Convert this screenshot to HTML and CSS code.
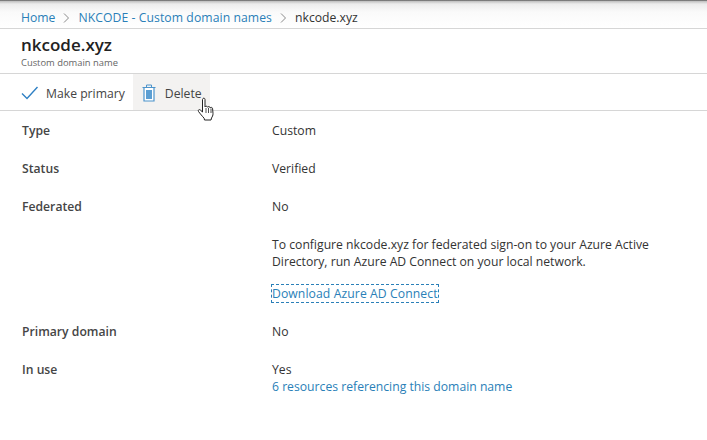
FILE: index.html
```html
<!DOCTYPE html>
<html lang="en">
<head>
<meta charset="utf-8">
<title>nkcode.xyz</title>
<link rel="stylesheet" href="styles.css">
</head>
<body>
<nav class="crumbs">
  <a href="#">Home</a>
  <svg class="chev" width="7" height="10" viewBox="0 0 7 10"><path d="M1 .5 5.5 5 1 9.500" fill="none" stroke="#8a8a8a" stroke-width="1"/></svg>
  <a href="#">NKCODE - Custom domain names</a>
  <svg class="chev" width="7" height="10" viewBox="0 0 7 10"><path d="M1 .5 5.500 5 1 9.500" fill="none" stroke="#8a8a8a" stroke-width="1"/></svg>
  <span>nkcode.xyz</span>
</nav>
<header class="head">
  <h1>nkcode.xyz</h1>
  <p>Custom domain name</p>
</header>
<div class="toolbar">
  <button class="tool">
    <svg width="18" height="14" viewBox="0 0 18 14"><path d="M1 7.500 6 12.500 16.500 1" fill="none" stroke="#2f80c4" stroke-width="1.400"/></svg>
    <span>Make primary</span>
  </button>
  <button class="tool hover">
    <svg width="14" height="18" viewBox="0 0 14 18"><path d="M.5 3.500h13M4.500 3.500V1h5v2.500" fill="none" stroke="#4d94cc" stroke-width="1"/><path d="M2 3.500h10V17H2z" fill="#fff" stroke="#4d94cc" stroke-width="1.200"/><path d="M4 6h6v9H4z" fill="#5c9fd3"/></svg>
    <span>Delete</span>
  </button>
  <svg class="cursor" width="20" height="25" viewBox="0 0 20 25"><path d="M6 1.500c1-.8 2 0 2 1V10c.3-1 2.300-1.200 2.600.2.500-1 2.400-.8 2.600.6.600-.8 2.300-.5 2.400.9l.4 4.800c.1 2-.8 3.300-1.500 4.500l-.5 2H7.500l-.4-1.800C5.500 19.500 3 16.500 1.500 14.500c-.8-1.200.6-2.600 1.800-1.500L5.500 15V2.500z" fill="#fff" stroke="#222" stroke-width="1"/><path d="M9 11v5M11.500 11v5M14 11.500V16" stroke="#222" stroke-width=".8" fill="none"/></svg>
</div>
<dl class="props">
  <div class="row"><dt>Type</dt><dd>Custom</dd></div>
  <div class="row"><dt>Status</dt><dd>Verified</dd></div>
  <div class="row"><dt>Federated</dt><dd>No
    <p class="note">To configure nkcode.xyz for federated sign-on to your Azure Active Directory, run Azure AD Connect on your local network.</p>
    <a class="focus" href="#">Download Azure AD Connect</a>
  </dd></div>
  <div class="row"><dt>Primary domain</dt><dd>No</dd></div>
  <div class="row"><dt>In use</dt><dd>Yes<br><a href="#">6 resources referencing this domain name</a></dd></div>
</dl>
</body>
</html>
```
FILE: styles.css
```css
* { box-sizing: border-box; }
html, body { margin: 0; padding: 0; }
body {
  width: 707px;
  height: 440px;
  overflow: hidden;
  background: #fff;
  color: #2f2f2f;
  font-family: "Open Sans", "Noto Sans", sans-serif;
  font-size: 12.2px;
  line-height: 17px;
}
a { color: #2a7fb8; text-decoration: none; }
.crumbs {
  height: 29px;
  padding: 7px 0 0 21px;
  display: flex;
  align-items: center;
  gap: 8px;
  background: linear-gradient(#3a3a3a 0, #bdbdbd 1px, #ececec 4px, #fafafa 12px, #fff 28px);
  border-bottom: 1px solid #d6d6d6;
}
.crumbs span { color: #333; }
.crumbs a:nth-of-type(2) { letter-spacing: .006em; }
.chev { flex: none; }
.head {
  height: 45px;
  padding: 4px 0 0 21px;
  border-bottom: 1px solid #d6d6d6;
}
.head h1 {
  margin: 0;
  font-size: 17px;
  line-height: 24px;
  font-weight: 600;
  color: #222;
}
.head p {
  margin: 0;
  font-size: 9.4px;
  line-height: 12px;
  color: #666;
}
.toolbar {
  position: relative;
  height: 37px;
  display: flex;
  padding-left: 13px;
  border-bottom: 1px solid #d6d6d6;
}
.tool {
  display: flex;
  align-items: center;
  gap: 7px;
  height: 36px;
  padding: 2px 8px 0;
  border: 0;
  background: none;
  font: inherit;
  color: #444;
}
.tool svg { flex: none; }
.tool.hover {
  width: 77px;
  padding: 2px 0 0 9px;
  gap: 9px;
  background: #f3f2f1;
}
.cursor {
  position: absolute;
  left: 197px;
  top: 23px;
}
.props {
  margin: 0;
  padding: 11px 0 0 22px;
}
.row {
  display: grid;
  grid-template-columns: 250px 1fr;
  margin-bottom: 21px;
}
.row dt { font-weight: 600; color: #454545; }
.row dd { margin: 0; color: #333; }
.note {
  width: 410px;
  margin: 21px 0 15px;
}
.focus {
  display: inline-block;
  letter-spacing: .007em;
  outline: 1px dashed #2a7fb8;
  outline-offset: 0;
}
```
